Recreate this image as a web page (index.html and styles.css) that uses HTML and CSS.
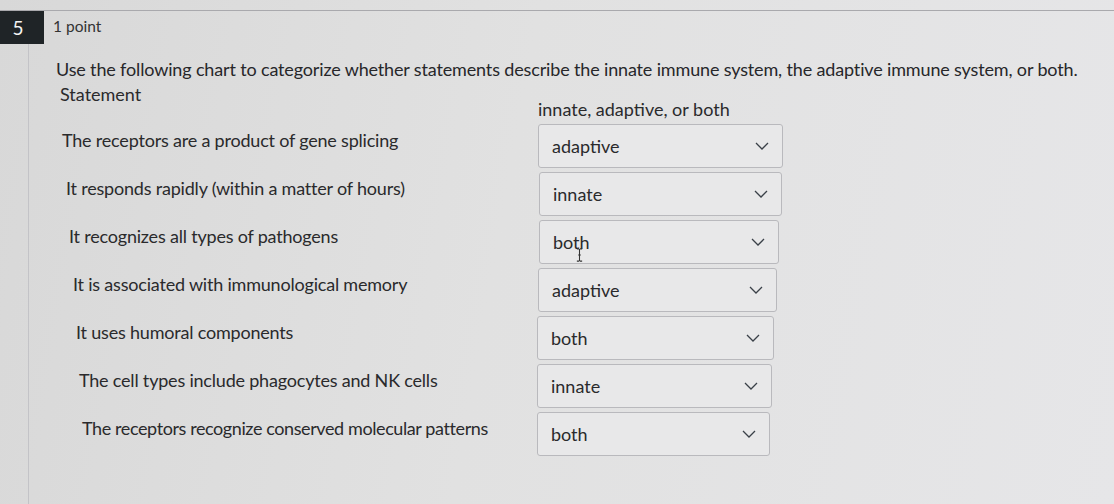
FILE: index.html
```html
<!DOCTYPE html>
<html>
<head>
<meta charset="utf-8">
<link rel="stylesheet" href="styles.css">
</head>
<body>
<div class="question">
  <div class="header">
    <div class="num">5</div>
    <div class="points">1 point</div>
  </div>
  <div class="content">
    <p class="prompt">Use the following chart to categorize whether statements describe the innate immune system, the adaptive immune system, or both.</p>
    <div class="table">
      <div class="th th-statement">Statement</div>
      <div class="th th-answer">innate, adaptive, or both</div>

      <div class="stmt s1">The receptors are a product of gene splicing</div>
      <div class="select w1"><span>adaptive</span><svg class="chev" viewBox="0 0 14 8"><path d="M1 1l6 6 6-6"/></svg></div>

      <div class="stmt s2">It responds rapidly (within a matter of hours)</div>
      <div class="select w2"><span>innate</span><svg class="chev" viewBox="0 0 14 8"><path d="M1 1l6 6 6-6"/></svg></div>

      <div class="stmt s3">It recognizes all types of pathogens</div>
      <div class="select w3"><span>both</span><svg class="cursor" viewBox="0 0 8 16"><path d="M1 1h2.5M4.5 1H7M4 1v14M1 15h2.5M4.5 15H7M2.5 8h3"/></svg><svg class="chev" viewBox="0 0 14 8"><path d="M1 1l6 6 6-6"/></svg></div>

      <div class="stmt s4">It is associated with immunological memory</div>
      <div class="select w4"><span>adaptive</span><svg class="chev" viewBox="0 0 14 8"><path d="M1 1l6 6 6-6"/></svg></div>

      <div class="stmt s5">It uses humoral components</div>
      <div class="select w5"><span>both</span><svg class="chev" viewBox="0 0 14 8"><path d="M1 1l6 6 6-6"/></svg></div>

      <div class="stmt s6">The cell types include phagocytes and NK cells</div>
      <div class="select w6"><span>innate</span><svg class="chev" viewBox="0 0 14 8"><path d="M1 1l6 6 6-6"/></svg></div>

      <div class="stmt s7">The receptors recognize conserved molecular patterns</div>
      <div class="select w7"><span>both</span><svg class="chev" viewBox="0 0 14 8"><path d="M1 1l6 6 6-6"/></svg></div>
    </div>
  </div>
</div>
</body>
</html>
```

FILE: styles.css
```css
html, body {
  margin: 0;
  padding: 0;
}
body {
  width: 1114px;
  height: 504px;
  overflow: hidden;
  background: linear-gradient(100deg, #d8d8d8 0%, #e1e1e1 45%, #e6e6e8 100%);
  font-family: Lato, "Noto Sans", sans-serif;
  color: #2a2a2c;
}
.question {
  margin-top: 10px;
  border-top: 1px solid #a9a9ad;
}
.header {
  display: flex;
  align-items: center;
  height: 33px;
}
.num {
  width: 44px;
  height: 33px;
  background: #1f2427;
  color: #f4f4f4;
  font-size: 19px;
  display: flex;
  align-items: center;
  justify-content: center;
  padding-right: 8px;
  box-sizing: border-box;
}
.points {
  margin-left: 9px;
  margin-top: -3px;
  font-size: 15.5px;
  color: #333;
}
.content {
  margin-left: 28px;
  border-left: 1px solid #c3c3c7;
  padding-left: 27px;
  padding-top: 13px;
  height: 460px;
}
.prompt {
  margin: 0;
  font-size: 18px;
  line-height: 24px;
  letter-spacing: -0.15px;
  color: #27272a;
}
.table {
  display: grid;
  grid-template-columns: 482px auto;
  grid-template-rows: 42px;
  grid-auto-rows: 48px;
  justify-items: start;
}
.th {
  font-size: 18px;
  line-height: 24px;
}
.th-statement {
  padding-left: 4px;
  margin-top: 1px;
}
.th-answer {
  padding-top: 16px;
}
.stmt {
  font-size: 18px;
  display: flex;
  align-items: center;
  letter-spacing: -0.2px;
  padding-bottom: 14px;
  height: 48px;
  box-sizing: border-box;
}
.s1 { padding-left: 6px; }
.s2 { padding-left: 10px; }
.s3 { padding-left: 13px; }
.s4 { padding-left: 17px; }
.s5 { padding-left: 20px; }
.s6 { padding-left: 23px; }
.s7 { padding-left: 26px; letter-spacing: -0.4px; }
.select {
  position: relative;
  display: flex;
  align-items: center;
  justify-content: space-between;
  width: 245px;
  height: 44px;
  box-sizing: border-box;
  border: 1px solid #b9b9bd;
  border-radius: 3px;
  background: #e8e8e9;
  padding: 0 13px 0 13px;
  font-size: 18px;
  color: #2a2a2c;
  margin-top: 1px;
}
.w1 { width: 245px; }
.w2 { width: 243px; margin-left: 1px; }
.w3 { width: 240px; margin-left: 1px; }
.w4 { width: 239px; }
.w5 { width: 237px; margin-left: -1px; }
.w6 { width: 235px; margin-left: -1px; }
.w7 { width: 233px; margin-left: -1px; }
.chev {
  width: 14px;
  height: 8px;
  fill: none;
  stroke: #3a4048;
  stroke-width: 1.3;
}
.cursor {
  position: absolute;
  left: 36px;
  top: 27px;
  width: 7px;
  height: 14px;
  fill: none;
  stroke: #333;
  stroke-width: 1.2;
}
```
